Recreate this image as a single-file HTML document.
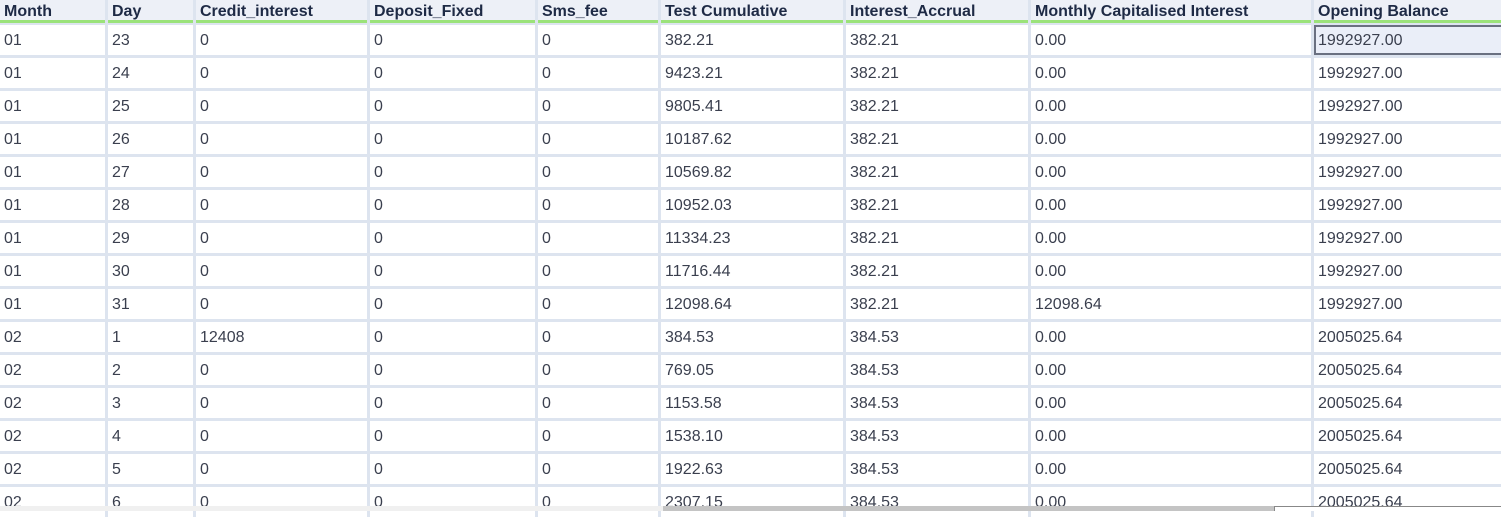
<!DOCTYPE html>
<html><head><meta charset="utf-8"><style>
body{margin:0;width:1501px;height:511px;overflow:hidden;background:#fff;font-family:"Liberation Sans",Arial,sans-serif;position:relative}
.g{position:absolute;left:0;top:0;display:grid;grid-template-columns:105px 85px 171px 165px 120px 182px 182px 280px 190px;column-gap:3px;row-gap:3px;background:#dde4ef;width:1501px;}
.g div{background:#fff;height:30px;line-height:32px;font-size:16px;color:#3a3f4e;padding-left:4px;white-space:nowrap;overflow:hidden;}
.g div.h{background:#edf0f7;height:20px;line-height:23px;font-weight:bold;color:#1e2a45;border-bottom:3px solid #9be27a;margin-bottom:-1px;padding-left:4px}
.g div.sel{outline:2px solid #6a7080;outline-offset:-2px;background:#eaeef8}
.sb{position:absolute;left:0;top:506px;width:1501px;height:5px;background:#f0f0f0;z-index:2}
.th{position:absolute;left:663px;top:506px;width:611px;height:5px;background:#c4c4c4;z-index:3}
.wb{position:absolute;left:1274px;top:506px;width:227px;height:5px;background:#fff;border-top:1px solid #888;border-left:1px solid #888;box-sizing:border-box;z-index:3}
</style></head><body>
<div class="g">
<div class="h">Month</div><div class="h">Day</div><div class="h">Credit_interest</div><div class="h">Deposit_Fixed</div><div class="h">Sms_fee</div><div class="h">Test Cumulative</div><div class="h">Interest_Accrual</div><div class="h">Monthly Capitalised Interest</div><div class="h">Opening Balance</div>
<div>01</div><div>23</div><div>0</div><div>0</div><div>0</div><div>382.21</div><div>382.21</div><div>0.00</div><div class="sel">1992927.00</div>
<div>01</div><div>24</div><div>0</div><div>0</div><div>0</div><div>9423.21</div><div>382.21</div><div>0.00</div><div>1992927.00</div>
<div>01</div><div>25</div><div>0</div><div>0</div><div>0</div><div>9805.41</div><div>382.21</div><div>0.00</div><div>1992927.00</div>
<div>01</div><div>26</div><div>0</div><div>0</div><div>0</div><div>10187.62</div><div>382.21</div><div>0.00</div><div>1992927.00</div>
<div>01</div><div>27</div><div>0</div><div>0</div><div>0</div><div>10569.82</div><div>382.21</div><div>0.00</div><div>1992927.00</div>
<div>01</div><div>28</div><div>0</div><div>0</div><div>0</div><div>10952.03</div><div>382.21</div><div>0.00</div><div>1992927.00</div>
<div>01</div><div>29</div><div>0</div><div>0</div><div>0</div><div>11334.23</div><div>382.21</div><div>0.00</div><div>1992927.00</div>
<div>01</div><div>30</div><div>0</div><div>0</div><div>0</div><div>11716.44</div><div>382.21</div><div>0.00</div><div>1992927.00</div>
<div>01</div><div>31</div><div>0</div><div>0</div><div>0</div><div>12098.64</div><div>382.21</div><div>12098.64</div><div>1992927.00</div>
<div>02</div><div>1</div><div>12408</div><div>0</div><div>0</div><div>384.53</div><div>384.53</div><div>0.00</div><div>2005025.64</div>
<div>02</div><div>2</div><div>0</div><div>0</div><div>0</div><div>769.05</div><div>384.53</div><div>0.00</div><div>2005025.64</div>
<div>02</div><div>3</div><div>0</div><div>0</div><div>0</div><div>1153.58</div><div>384.53</div><div>0.00</div><div>2005025.64</div>
<div>02</div><div>4</div><div>0</div><div>0</div><div>0</div><div>1538.10</div><div>384.53</div><div>0.00</div><div>2005025.64</div>
<div>02</div><div>5</div><div>0</div><div>0</div><div>0</div><div>1922.63</div><div>384.53</div><div>0.00</div><div>2005025.64</div>
<div>02</div><div>6</div><div>0</div><div>0</div><div>0</div><div>2307.15</div><div>384.53</div><div>0.00</div><div>2005025.64</div>
</div>
<div class="sb"></div><div class="th"></div><div class="wb"></div>
</body></html>
